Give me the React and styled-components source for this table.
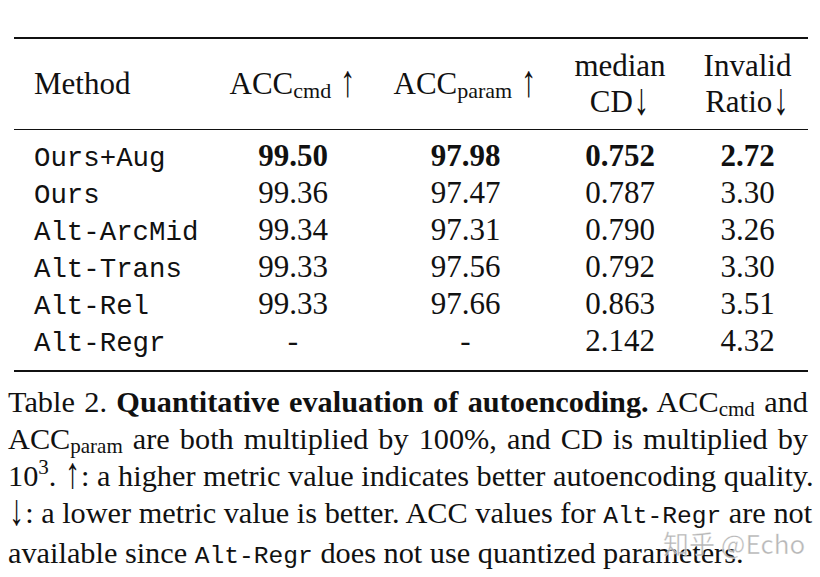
import React from "react";
import styled, { createGlobalStyle } from "styled-components";

const GlobalStyle = createGlobalStyle`
  html, body {
    margin: 0;
    padding: 0;
    background: #fff;
  }
  body {
    font-family: "Liberation Serif", "Times New Roman", serif;
    color: #111;
  }
`;

const Page = styled.div`
  position: relative;
  width: 820px;
  height: 577px;
  padding-top: 37px;
  box-sizing: border-box;
  overflow: hidden;
`;

const Table = styled.div`
  margin-left: 14px;
  width: 794px;
  border-top: 2px solid #111;
  border-bottom: 2px solid #111;
  font-size: 31px;
`;

const columns = "194px 170px 175px 134px 121px";

const HeaderRow = styled.div`
  display: grid;
  grid-template-columns: ${columns};
  align-items: center;
  height: 90px;
  border-bottom: 1px solid #111;
  line-height: 36.5px;
`;

const Body = styled.div`
  padding: 6.5px 0 10px;
`;

const Row = styled.div`
  display: grid;
  grid-template-columns: ${columns};
  align-items: baseline;
  height: 37.2px;
  line-height: 37.2px;
`;

const Cell = styled.div`
  text-align: ${(p) => (p.$left ? "left" : "center")};
  padding-left: ${(p) => (p.$left ? "20px" : "0")};
  font-weight: ${(p) => (p.$bold ? 700 : 400)};
  white-space: nowrap;
`;

const Mono = styled.span`
  font-family: "Liberation Mono", "Courier New", monospace;
  font-size: ${(p) => p.$size || "27.4px"};
`;

const Sub = styled.span`
  font-size: ${(p) => p.$size || "22px"};
  vertical-align: -4px;
  line-height: 0;
`;

const Sup = styled.span`
  font-size: 21px;
  vertical-align: 12px;
  line-height: 0;
`;

const Arrow = styled.span`
  display: inline-block;
  font-family: "Liberation Serif", "Times New Roman", serif;
  font-weight: 300;
  line-height: 1;
  transform: scale(1, 1.45) translateY(-1px);
  transform-origin: 50% 60%;
  margin: 0 1px;
`;

const Caption = styled.div`
  margin-left: 8px;
  width: 800px;
  margin-top: 12px;
  font-size: 30.3px;
  line-height: 37px;
`;

const Line = styled.div`
  text-align: ${(p) => (p.$last ? "left" : "justify")};
  text-align-last: ${(p) => (p.$last ? "left" : "justify")};
  white-space: nowrap;
`;

const Bold = styled.b`
  font-weight: 700;
`;

const Watermark = styled.div`
  position: absolute;
  left: 663px;
  top: 526px;
  font-family: "Noto Sans CJK SC", "Noto Sans", sans-serif;
  font-size: 26px;
  line-height: 34px;
  color: rgba(170, 170, 170, 0.85);
  -webkit-text-stroke: 0.6px rgba(255, 255, 255, 0.7);
  white-space: nowrap;
`;

const rows = [
  ["Ours+Aug", "99.50", "97.98", "0.752", "2.72", true],
  ["Ours", "99.36", "97.47", "0.787", "3.30"],
  ["Alt-ArcMid", "99.34", "97.31", "0.790", "3.26"],
  ["Alt-Trans", "99.33", "97.56", "0.792", "3.30"],
  ["Alt-Rel", "99.33", "97.66", "0.863", "3.51"],
  ["Alt-Regr", "-", "-", "2.142", "4.32"],
];

export default function App() {
  return (
    <>
      <GlobalStyle />
      <Page>
        <Table>
          <HeaderRow>
            <Cell $left>Method</Cell>
            <Cell>
              ACC<Sub>cmd</Sub> <Arrow>↑</Arrow>
            </Cell>
            <Cell>
              ACC<Sub>param</Sub> <Arrow>↑</Arrow>
            </Cell>
            <Cell>
              median
              <br />
              CD<Arrow>↓</Arrow>
            </Cell>
            <Cell>
              Invalid
              <br />
              Ratio<Arrow>↓</Arrow>
            </Cell>
          </HeaderRow>
          <Body>
            {rows.map(([name, a, b, c, d, bold]) => (
              <Row key={name}>
                <Cell $left>
                  <Mono>{name}</Mono>
                </Cell>
                <Cell $bold={bold}>{a}</Cell>
                <Cell $bold={bold}>{b}</Cell>
                <Cell $bold={bold}>{c}</Cell>
                <Cell $bold={bold}>{d}</Cell>
              </Row>
            ))}
          </Body>
        </Table>
        <Caption>
          <Line>
            Table 2. <Bold>Quantitative evaluation of autoencoding.</Bold> ACC
            <Sub $size="21px">cmd</Sub> and
          </Line>
          <Line>
            ACC<Sub $size="21px">param</Sub> are both multiplied by 100%, and CD
            is multiplied by
          </Line>
          <Line>
            10<Sup>3</Sup>. <Arrow>↑</Arrow>: a higher metric value indicates
            better autoencoding quality.
          </Line>
          <Line>
            <Arrow>↓</Arrow>: a lower metric value is better. ACC values for{" "}
            <Mono $size="24.6px">Alt-Regr</Mono> are not
          </Line>
          <Line $last>
            available since <Mono $size="24.6px">Alt-Regr</Mono> does not use
            quantized parameters.
          </Line>
        </Caption>
        <Watermark>知乎 @Echo</Watermark>
      </Page>
    </>
  );
}
